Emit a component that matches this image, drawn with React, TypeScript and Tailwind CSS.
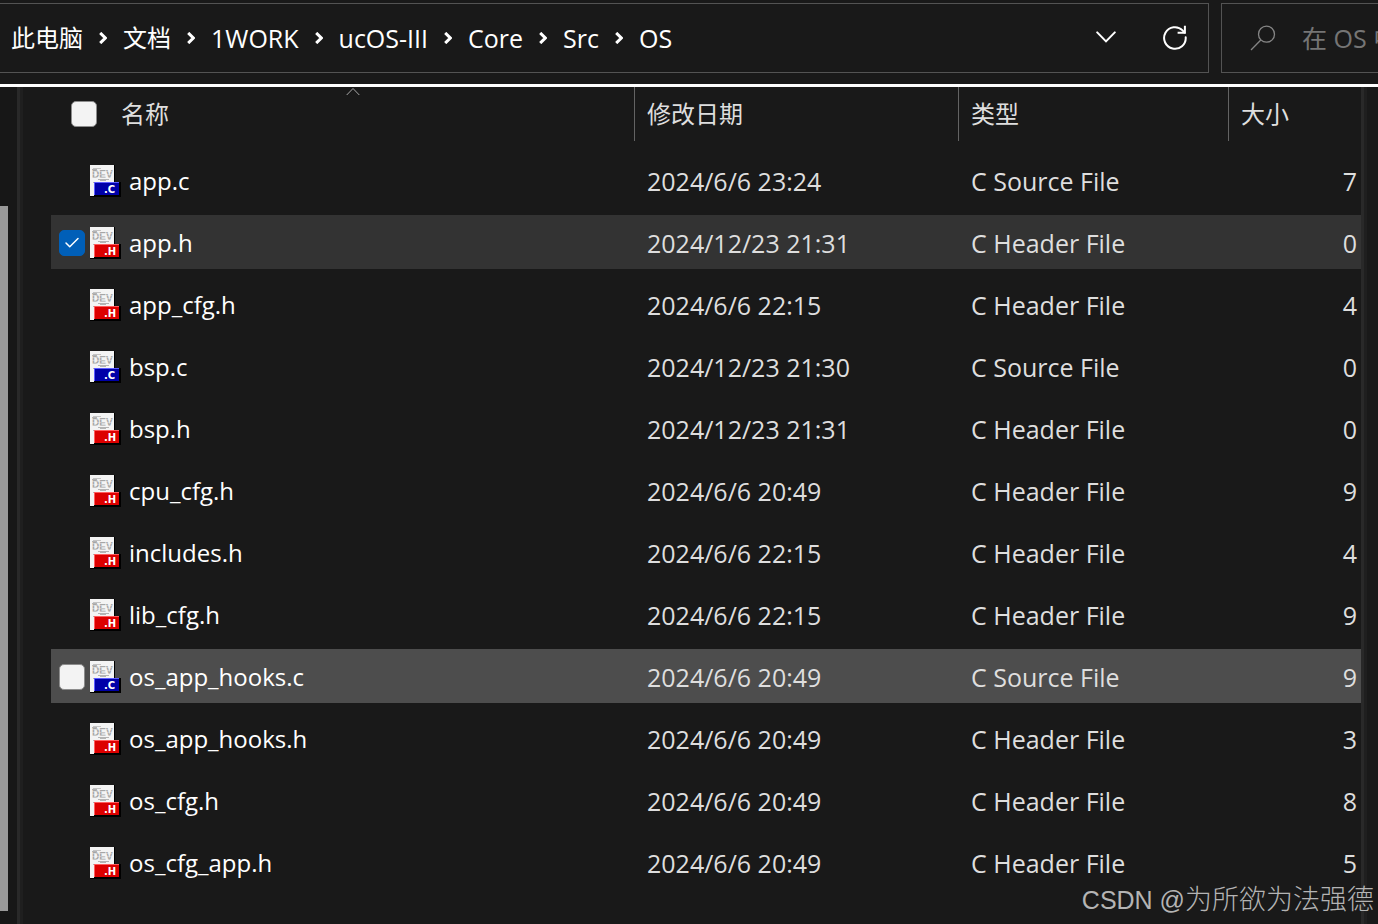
import React, { useState } from "react";
import { Check } from "lucide-react";
import { clsx } from "clsx";
import { twMerge } from "tailwind-merge";

// --- Utility ---
function cn(...inputs: unknown[]) {
  return twMerge(clsx(inputs));
}

// --- Data ---
const crumbs = ["此电脑", "文档", "1WORK", "ucOS-III", "Core", "Src", "OS"];

const files = [
  { name: "app.c", date: "2024/6/6 23:24", size: "7" },
  { name: "app.h", date: "2024/12/23 21:31", size: "0" },
  { name: "app_cfg.h", date: "2024/6/6 22:15", size: "4" },
  { name: "bsp.c", date: "2024/12/23 21:30", size: "0" },
  { name: "bsp.h", date: "2024/12/23 21:31", size: "0" },
  { name: "cpu_cfg.h", date: "2024/6/6 20:49", size: "9" },
  { name: "includes.h", date: "2024/6/6 22:15", size: "4" },
  { name: "lib_cfg.h", date: "2024/6/6 22:15", size: "9" },
  { name: "os_app_hooks.c", date: "2024/6/6 20:49", size: "9" },
  { name: "os_app_hooks.h", date: "2024/6/6 20:49", size: "3" },
  { name: "os_cfg.h", date: "2024/6/6 20:49", size: "8" },
  { name: "os_cfg_app.h", date: "2024/6/6 20:49", size: "5" },
];

const hovered = "os_app_hooks.c";

// --- Icons ---
function CrumbArrow() {
  return (
    <svg viewBox="0 0 8 12" className="w-2 h-3 shrink-0" aria-hidden="true">
      <path d="M1.2 0.9 L6.3 6 L1.2 11.1" fill="none" stroke="#fff" strokeWidth="3" />
    </svg>
  );
}

function ExpandIcon() {
  return (
    <svg viewBox="0 0 20 12" className="w-5 h-3" fill="none" stroke="#fff" strokeWidth="2" strokeLinecap="round">
      <path d="M1.2 1.4 L10 10.4 L18.8 1.4" />
    </svg>
  );
}

function RefreshIcon() {
  return (
    <svg viewBox="0 0 26 26" className="w-[26px] h-[26px]" fill="none" stroke="#fff" strokeWidth="2">
      <path d="M23.7 13.2 A10.8 10.8 0 1 1 20.6 6.4 L22.4 8.6" strokeLinecap="round" />
      <path d="M22.9 1.8 V8.8 H15.6" />
    </svg>
  );
}

function SearchIcon() {
  return (
    <svg viewBox="0 0 26 26" className="w-[26px] h-[26px] shrink-0" fill="none" stroke="#858585" strokeWidth="1.3">
      <circle cx="16.5" cy="9.2" r="8" />
      <path d="M10.8 15 L1 25" />
    </svg>
  );
}

function FileIcon({ header }: { header: boolean }) {
  return (
    <svg viewBox="0 0 32 32" className="w-8 h-8 shrink-0" aria-hidden="true">
      <rect x="1" y="0" width="25" height="32" fill="#000" />
      <rect x="1" y="0" width="24" height="31" fill="#f4f4f4" />
      <path d="M4 3.5 H12" stroke="#c4c4c4" />
      <path d="M3 4.5 H8 M9 14.5 H20 M11 15.5 H17 M4 17.5 H9" stroke="#b4b4b4" />
      <text x="3" y="13" fontSize="10" fontWeight="700" fill="#a6a6a6" fontFamily="Liberation Sans, sans-serif">
        DEV
      </text>
      <path d="M3 6.5 H23 M3 9.5 H23 M3 12.5 H22" stroke="#f4f4f4" strokeOpacity="0.4" />
      <rect x="5" y="17" width="27" height="15" fill="#000" />
      <rect x="5" y="17" width="25" height="13" fill={header ? "#ff5c5c" : "#5c5cff"} />
      <rect x="6" y="18" width="24" height="12" fill={header ? "#dc0000" : "#0000a8"} />
      <text x="15" y="28" fontSize="10" fontWeight="700" fill="#fff" fontFamily="DejaVu Sans, sans-serif">
        {header ? ".H" : ".C"}
      </text>
    </svg>
  );
}

// --- Controls ---
type TickProps = {
  label: string;
  checked: boolean;
  onChange: () => void;
  visible?: boolean;
};

function Tick({ label, checked, onChange, visible = true }: TickProps) {
  return (
    <span className={cn("relative block w-[26px] h-[26px] shrink-0", !visible && "opacity-0 hover:opacity-100")}>
      <input
        type="checkbox"
        aria-label={label}
        checked={checked}
        onChange={onChange}
        className="block appearance-none w-[26px] h-[26px] rounded-[5px] border border-[#8c8c8c] bg-[#f3f3f3] checked:border-[#005fb8] checked:bg-[#005fb8]"
      />
      {checked && (
        <Check size={18} strokeWidth={2} className="absolute inset-0 m-auto text-white pointer-events-none" />
      )}
    </span>
  );
}

export default function App() {
  const [selected, setSelected] = useState<string[]>(["app.h"]);

  const toggle = (name: string) =>
    setSelected((prev) => (prev.includes(name) ? prev.filter((n) => n !== name) : [...prev, name]));

  const toggleAll = () => setSelected((prev) => (prev.length === files.length ? [] : files.map((f) => f.name)));

  return (
    <div className="relative min-h-screen flex flex-col overflow-hidden bg-[#191919] text-white font-['Open_Sans','Noto_Sans_CJK_SC',sans-serif]">
      {/* Address bar and search */}
      <header className="flex gap-3 pt-[3px] pb-[11px] border-b-[3px] border-white">
        <div className="flex-1 min-w-0 h-[70px] flex items-center justify-between border border-l-0 border-[#535353] pl-[11px] pr-5">
          <nav className="flex items-center gap-4 leading-8 whitespace-nowrap">
            {crumbs.map((crumb, i) => (
              <React.Fragment key={crumb}>
                {i > 0 && <CrumbArrow />}
                <a href="#" className={/^\w/.test(crumb) ? "text-[25px]" : "text-[24px]"}>
                  {crumb}
                </a>
              </React.Fragment>
            ))}
          </nav>
          <div className="flex items-center gap-[46px] pb-[3px]">
            <button type="button" aria-label="展开">
              <ExpandIcon />
            </button>
            <button type="button" aria-label="刷新">
              <RefreshIcon />
            </button>
          </div>
        </div>
        <label className="w-[157px] h-[70px] flex items-center gap-[26px] overflow-hidden border border-r-0 border-[#535353] pl-7">
          <SearchIcon />
          <input
            type="text"
            aria-label="搜索"
            placeholder="在 OS 中搜索"
            className="w-[180px] shrink-0 bg-transparent text-[25px] leading-8 placeholder:text-[#757575] outline-none"
          />
        </label>
      </header>

      <div className="flex-1 flex">
        {/* Navigation pane scrollbar */}
        <aside className="w-[17px] shrink-0 flex pt-[119px] pb-[13px] bg-[#171717]">
          <div className="w-2 bg-[#999999]" />
        </aside>
        <div className="w-[6px] shrink-0 border-l-[3px] border-[#292929] bg-[#1f1f1f]" />

        <main className="flex-1 min-w-0 pl-7">
          <table className="w-full table-fixed border-separate border-spacing-0 text-left text-[24px] leading-8">
            <thead className="text-[#dedede]">
              <tr className="h-[62px]">
                <th className="p-0 align-top font-normal">
                  <div className="relative h-[54px] flex items-center gap-6 pl-5 border-r border-[#636363]">
                    <Tick
                      label="全选"
                      checked={selected.length === files.length}
                      onChange={toggleAll}
                    />
                    名称
                    <div className="absolute top-0 left-5 right-0 flex justify-center">
                      <svg viewBox="0 0 14 9" className="w-[14px] h-[9px]" fill="none" stroke="#a8a8a8">
                        <path d="M0.7 8 L7 1.5 L13.3 8" />
                      </svg>
                    </div>
                  </div>
                </th>
                <th className="w-[324px] p-0 align-top font-normal">
                  <div className="h-[54px] flex items-center pl-3 border-r border-[#636363]">修改日期</div>
                </th>
                <th className="w-[270px] p-0 align-top font-normal">
                  <div className="h-[54px] flex items-center pl-3 border-r border-[#636363]">类型</div>
                </th>
                <th className="w-[132px] p-0 align-top font-normal">
                  <div className="h-[54px] flex items-center pl-3">大小</div>
                </th>
              </tr>
            </thead>
            <tbody className="text-[#dedede]">
              {files.map((file) => {
                const isSelected = selected.includes(file.name);
                const isHovered = file.name === hovered;
                const isHeader = file.name.endsWith(".h");
                const cell = cn(
                  "h-[62px] p-0 pt-0.5 border-y-4 border-transparent bg-clip-padding text-[25px]",
                  isSelected && "bg-[#333333]",
                  isHovered && "bg-[#4d4d4d]"
                );
                return (
                  <tr key={file.name}>
                    <td className={cn(cell, "text-[24px]")}>
                      <div className="flex items-center pl-2 text-white">
                        <Tick
                          label={file.name}
                          checked={isSelected}
                          onChange={() => toggle(file.name)}
                          visible={isSelected || isHovered}
                        />
                        <span className="flex items-center gap-2 pl-1">
                          <FileIcon header={isHeader} />
                          {file.name}
                        </span>
                      </div>
                    </td>
                    <td className={cn(cell, "pl-3")}>{file.date}</td>
                    <td className={cn(cell, "pl-3")}>{isHeader ? "C Header File" : "C Source File"}</td>
                    <td className={cn(cell, "pr-1 text-right")}>{file.size}</td>
                  </tr>
                );
              })}
            </tbody>
          </table>
        </main>
        <div className="w-[6px] shrink-0 border-l-[3px] border-[#292929] bg-[#1f1f1f]" />
        <div className="w-[11px] shrink-0" />
      </div>

      {/* Watermark */}
      <p className="absolute right-1 bottom-1 text-[25px] leading-10 text-[#b4b4b4] font-['Liberation_Sans','Noto_Sans_CJK_SC',sans-serif] pointer-events-none">
        CSDN @<span className="text-[27px] font-light">为所欲为法强德</span>
      </p>
    </div>
  );
}
